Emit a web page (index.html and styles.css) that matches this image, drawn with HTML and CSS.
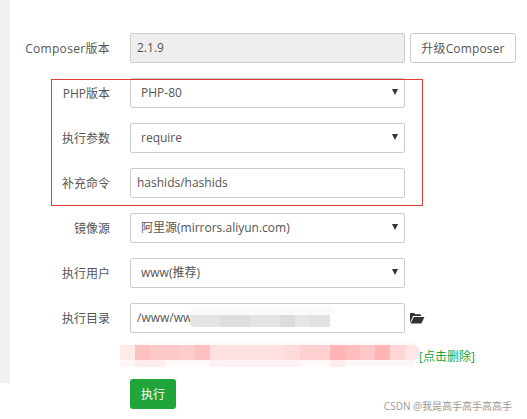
FILE: index.html
```html
<!DOCTYPE html>
<html lang="en">

<head>
    <meta charset="UTF-8">
    <title>composer</title>
    <link rel="stylesheet" href="styles.css">
</head>

<body>
    <div class="page">
        <div class="side"></div>
        <div class="form">
            <div class="row">
                <label class="wide">Composer版本</label>
                <div class="box readonly">2.1.9</div>
                <button class="upgrade">升级Composer</button>
            </div>
            <div class="row">
                <label>PHP版本</label>
                <div class="box select">PHP-80<i class="arrow"></i></div>
            </div>
            <div class="row">
                <label>执行参数</label>
                <div class="box select">require<i class="arrow"></i></div>
            </div>
            <div class="row">
                <label>补充命令</label>
                <div class="box">hashids/hashids</div>
            </div>
            <div class="row">
                <label>镜像源</label>
                <div class="box select">阿里源(mirrors.aliyun.com)<i class="arrow"></i></div>
            </div>
            <div class="row">
                <label>执行用户</label>
                <div class="box select">www(推荐)<i class="arrow"></i></div>
            </div>
            <div class="row">
                <label>执行目录</label>
                <div class="box">/www/ww</div>
                <svg class="folder" width="16" height="12" viewBox="0 0 16 12">
                    <path d="M1 11V2C1 1.400 1.400 1 2 1h3L6.300 2.300H11c.6 0 1 .4 1 1V4H4L1 11z" fill="#333"/>
                    <path d="M4.800 5H15.500L12.300 11.500H1.600z" fill="#333"/>
                </svg>
            </div>
            <div class="row note">
                <a class="del">[点击删除]</a>
            </div>
            <button class="run">执行</button>
        </div>
        <div class="redbox"></div>
        <div class="smear grey-top"></div>
        <div class="smear grey"></div>
        <div class="smear pink-top"></div>
        <div class="smear pink"></div>
        <div class="smear pink-low"></div>
        <div class="mark">CSDN @我是高手高手高高手</div>
    </div>
</body>

</html>
```

FILE: styles.css
```css
* {
    box-sizing: border-box;
}

body {
    margin: 0;
    background: #fff;
    font-family: "Open Sans", "Noto Sans CJK SC", sans-serif;
    font-size: 12px;
    color: #555;
}

.page {
    position: relative;
    width: 527px;
    height: 419px;
    overflow: hidden;
}

.side {
    position: absolute;
    left: 0;
    top: 0;
    width: 10px;
    height: 383px;
    background: #f0f0f0;
}

.form {
    padding: 33px 0 0 0;
}

.row {
    display: flex;
    align-items: center;
    height: 30px;
    margin-bottom: 15px;
}

.row label {
    width: 110px;
    margin-right: 20px;
    text-align: right;
}

.row .wide {
    letter-spacing: 0.3px;
}

.box {
    position: relative;
    width: 275px;
    height: 30px;
    padding: 0 6px;
    border: 1px solid #ccc;
    border-radius: 2px;
    line-height: 27px;
}

.readonly {
    background: #eee;
}

.select {
    padding-left: 10px;
    line-height: 28px;
}

.arrow {
    position: absolute;
    right: 6px;
    top: 10px;
    border-left: 3.5px solid transparent;
    border-right: 3.5px solid transparent;
    border-top: 6px solid #333;
}

.upgrade {
    width: 106px;
    height: 30px;
    margin-left: 5px;
    padding: 0;
    background: #fff;
    border: 1px solid #ccc;
    border-radius: 3px;
    font: inherit;
    letter-spacing: 0.15px;
    color: #555;
}

.folder {
    margin-left: 4px;
}

.note {
    justify-content: flex-start;
    height: 21px;
    margin: -3px 0 13px 419px;
}

.del {
    font-size: 12px;
    color: #20a53a;
    white-space: nowrap;
}

.run {
    display: block;
    width: 46px;
    height: 30px;
    margin-left: 130px;
    background: #20a53a;
    border: none;
    border-radius: 3px;
    font: inherit;
    color: #fff;
}

.redbox {
    position: absolute;
    left: 51px;
    top: 79px;
    width: 372px;
    height: 127px;
    border: 1px solid #e53935;
}

.smear {
    position: absolute;
}

.grey-top {
    left: 190px;
    top: 307px;
    width: 145px;
    height: 8px;
    background: #fafafa;
    border-radius: 5px 5px 0 0;
}

.grey {
    left: 190px;
    top: 315px;
    width: 140px;
    height: 12px;
    border-radius: 0 0 0 5px;
    background: linear-gradient(90deg,
        #e4e4e4 0 30px, #dedede 30px 60px, #e4e4e4 60px 90px,
        #dcdcdc 90px 105px, #e6e6e6 105px 120px, #e2e2e2 120px);
}

.pink-top {
    left: 135px;
    top: 343px;
    width: 280px;
    height: 2px;
    background: #fff8f8;
}

.pink {
    left: 120px;
    top: 345px;
    width: 300px;
    height: 15px;
    border-radius: 0 6px 6px 0;
    background: linear-gradient(90deg,
        #ffeaea 0 15px, #ffc0c0 15px 30px, #ffc8c8 30px 60px,
        #ffcccc 60px 75px, #ffc0c0 75px 90px, #ffe0e0 90px 165px,
        #ffdada 165px 180px, #ffd0d0 180px 210px, #ffb5b5 210px 225px,
        #ffbcbc 225px 240px, #ffc8c8 240px 255px, #ffb5b5 255px 270px,
        #ffd5d5 270px 285px, #ffe5e5 285px);
}

.pink-low {
    left: 120px;
    top: 360px;
    width: 295px;
    height: 7px;
    background: linear-gradient(90deg,
        #fff6f6 0 15px, #ffecec 15px 45px, #fff8f8 45px 90px,
        #fff2f2 90px 180px, #fff8f8 180px 210px, #ffecec 210px 225px, #fff6f6 225px);
}

.mark {
    position: absolute;
    right: 15px;
    top: 398px;
    font-size: 10px;
    color: #999;
    white-space: nowrap;
}
```
